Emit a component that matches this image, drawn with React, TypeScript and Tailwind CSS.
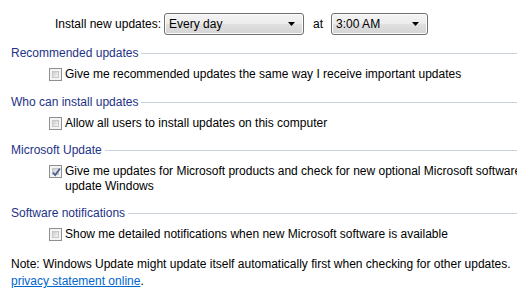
const font = { fontFamily: '"Segoe UI", "Liberation Sans", Arial, sans-serif' };

function Combo({ value, width }: { value: string; width: string }) {
  return (
    <div
      className={`${width} h-[22px] flex items-center justify-between pl-[4px] pr-[8px] rounded-[3px] border border-[#707070] bg-[linear-gradient(#f3f3f3_0%,#ececec_50%,#e0e0e0_50%,#d4d4d4_100%)] shadow-[inset_0_0_0_1px_#fcfcfc]`}
    >
      <span>{value}</span>
      <svg width="7" height="4" viewBox="0 0 7 4">
        <path d="M0 0h7L3.5 4z" fill="#000" />
      </svg>
    </div>
  );
}

function Header({ title, className }: { title: string; className: string }) {
  return (
    <div className={`flex items-center pl-[11px] h-[16px] ${className}`}>
      <span className="text-[#1e3287] pr-[3px] whitespace-nowrap">{title}</span>
      <div className="flex-1 h-px bg-[#ccd3de]" />
    </div>
  );
}

function Check({ checked }: { checked?: boolean }) {
  return (
    <div className="w-[13px] h-[13px] shrink-0 border border-[#8e8f8f] bg-[#f4f4f4] p-[2px]">
      <div className="w-full h-full border border-[#c7c7c7] bg-[linear-gradient(135deg,#cbcbcb,#f6f6f6)] relative">
        {checked && (
          <svg className="absolute -left-[2px] -top-[2px]" width="11" height="11" viewBox="0 0 11 11">
            <path d="M2 5.5l2.2 2.5L9 1.5" stroke="#4a5f97" strokeWidth="1.8" fill="none" />
          </svg>
        )}
      </div>
    </div>
  );
}

function Option({ text, checked, className }: { text: React.ReactNode; checked?: boolean; className: string }) {
  return (
    <div className={`flex items-start gap-[3px] pl-[49px] ${className}`}>
      <div className="pt-[1px]">
        <Check checked={checked} />
      </div>
      <div className="whitespace-nowrap leading-[15px]">{text}</div>
    </div>
  );
}

export default function App() {
  return (
    <div className="w-[517px] h-[298px] overflow-hidden bg-white text-[12px] text-black leading-[16px]" style={font}>
      <div className="w-[560px] pt-[13px]">
        <div className="flex items-center pl-[55px]">
          <span className="mr-[3px]">Install new updates:</span>
          <Combo value="Every day" width="w-[140px]" />
          <span className="ml-[9px] mr-[8px]">at</span>
          <Combo value="3:00 AM" width="w-[97px]" />
        </div>
        <Header title="Recommended updates" className="mt-[10px]" />
        <Option className="mt-[6px]" text="Give me recommended updates the same way I receive important updates" />
        <Header title="Who can install updates" className="mt-[12px]" />
        <Option className="mt-[6px]" text="Allow all users to install updates on this computer" />
        <Header title="Microsoft Update" className="mt-[11px]" />
        <Option
          className="mt-[6px]"
          checked
          text={
            <>
              Give me updates for Microsoft products and check for new optional Microsoft software when I
              <br />
              update Windows
            </>
          }
        />
        <Header title="Software notifications" className="mt-[11px]" />
        <Option className="mt-[6px]" text="Show me detailed notifications when new Microsoft software is available" />
        <div className="pl-[11px] mt-[14px] leading-[17px]">
          <div className="whitespace-nowrap">Note: Windows Update might update itself automatically first when checking for other updates.</div>
          <div>
            <a className="text-[#0066cc] underline">privacy statement online</a>.
          </div>
        </div>
      </div>
    </div>
  );
}
